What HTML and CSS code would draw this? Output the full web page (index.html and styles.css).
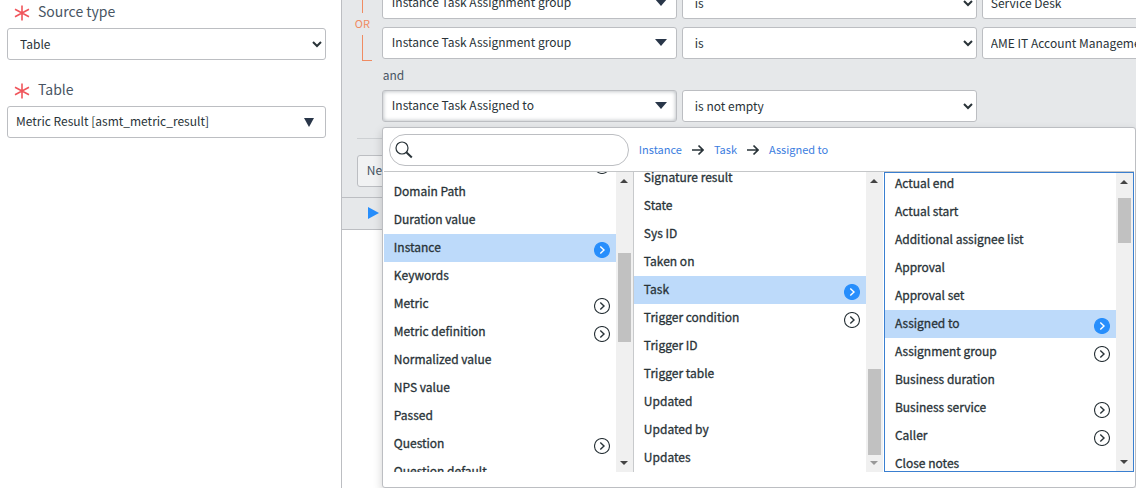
FILE: index.html
```html
<!DOCTYPE html>
<html lang="en">
<head>
<meta charset="utf-8">
<title>Condition builder</title>
<link rel="stylesheet" href="styles.css">
</head>
<body>
<svg class="defs" aria-hidden="true">
  <symbol id="star" viewBox="0 0 16 16"><path d="M8 .5v15M1 4.3l14 7.4M15 4.3L1 11.7" fill="none" stroke="#f0555b" stroke-width="1.6"/></symbol>
  <symbol id="more" viewBox="0 0 16 16"><circle class="ring" cx="8" cy="8" r="7.5"/><path class="chev" d="M6.3 4.5L10 8l-3.700 3.500"/></symbol>
  <symbol id="arrow" viewBox="0 0 12 12"><path d="M0 6h11M6.500 1.500L11 6l-4.500 4.500" fill="none" stroke="#293338" stroke-width="1.7"/></symbol>
</svg>
<aside class="source">
  <div class="field">
    <label class="field-label" for="stype"><svg class="star"><use href="#star"/></svg>Source type</label>
    <select class="control" id="stype"><option>Table</option></select>
  </div>
  <div class="field">
    <label class="field-label" for="table"><svg class="star"><use href="#star"/></svg>Table</label>
    <button class="control picker picker-table" id="table" type="button">Metric Result [asmt_metric_result]<svg class="caret-tall" viewBox="0 0 10 9"><path d="M0 0h10L5 9z"/></svg></button>
  </div>
</aside>
<main class="builder">
  <section class="conditions">
    <div class="group">
      <div class="or"><span class="or-top"></span><span class="or-text">OR</span><span class="or-bottom"></span></div>
      <div class="rows">
        <div class="row">
          <button class="control picker" type="button">Instance Task Assignment group<svg class="caret" viewBox="0 0 12 7"><path d="M0 0h12L6 7z"/></svg></button>
          <select class="control" aria-label="Operator"><option>is</option></select>
          <input class="control" aria-label="Value" value="Service Desk">
        </div>
        <div class="row">
          <button class="control picker" type="button">Instance Task Assignment group<svg class="caret" viewBox="0 0 12 7"><path d="M0 0h12L6 7z"/></svg></button>
          <select class="control" aria-label="Operator"><option>is</option></select>
          <input class="control" aria-label="Value" value="AME IT Account Management">
        </div>
      </div>
    </div>
    <div class="and">and</div>
    <div class="row row-last">
      <button class="control picker open" type="button">Instance Task Assigned to<svg class="caret" viewBox="0 0 12 7"><path d="M0 0h12L6 7z"/></svg></button>
      <select class="control" aria-label="Operator"><option>is not empty</option></select>
    </div>
    <div class="new-area"><button class="new" type="button">New Criteria</button></div>
  </section>
  <div class="related"><svg class="play" viewBox="0 0 11 12"><path d="M0 0l11 6-11 6z"/></svg></div>

  <div class="popup">
    <header class="popup-head">
      <label class="search"><svg viewBox="0 0 18 18"><circle cx="7" cy="7" r="6"/><path d="M11.300 11.300l5.500 5.200" stroke-width="2"/></svg><input type="search" aria-label="Search fields"></label>
      <nav class="crumbs"><a href="#">Instance</a><svg><use href="#arrow"/></svg><a href="#">Task</a><svg><use href="#arrow"/></svg><a href="#">Assigned to</a></nav>
    </header>
    <div class="columns">
      <div class="column first">
        <ul class="list">
          <li><svg><use href="#more"/></svg></li>
          <li>Domain Path</li>
          <li>Duration value</li>
          <li class="on">Instance<svg><use href="#more"/></svg></li>
          <li>Keywords</li>
          <li>Metric<svg><use href="#more"/></svg></li>
          <li>Metric definition<svg><use href="#more"/></svg></li>
          <li>Normalized value</li>
          <li>NPS value</li>
          <li>Passed</li>
          <li>Question<svg><use href="#more"/></svg></li>
          <li>Question default</li>
        </ul>
        <div class="bar"><span class="up"></span><span class="thumb"></span><span class="down"></span></div>
      </div>
      <div class="column second">
        <ul class="list">
          <li>Signature result</li>
          <li>State</li>
          <li>Sys ID</li>
          <li>Taken on</li>
          <li class="on">Task<svg><use href="#more"/></svg></li>
          <li>Trigger condition<svg><use href="#more"/></svg></li>
          <li>Trigger ID</li>
          <li>Trigger table</li>
          <li>Updated</li>
          <li>Updated by</li>
          <li>Updates</li>
        </ul>
        <div class="bar"><span class="up"></span><span class="thumb"></span><span class="down end"></span></div>
      </div>
      <div class="column third">
        <ul class="list">
          <li>Actual end</li>
          <li>Actual start</li>
          <li>Additional assignee list</li>
          <li>Approval</li>
          <li>Approval set</li>
          <li class="on">Assigned to<svg><use href="#more"/></svg></li>
          <li>Assignment group<svg><use href="#more"/></svg></li>
          <li>Business duration</li>
          <li>Business service<svg><use href="#more"/></svg></li>
          <li>Caller<svg><use href="#more"/></svg></li>
          <li>Close notes</li>
        </ul>
        <div class="bar"><span class="up"></span><span class="thumb"></span><span class="down"></span></div>
      </div>
    </div>
  </div>
</main>
</body>
</html>
```
FILE: styles.css
```css
* { box-sizing: border-box; }
body {
  margin: 0;
  display: flex;
  min-height: 100vh;
  overflow: hidden;
  background: #fff;
  color: #293338;
  font: 12px/20px "Noto Sans CJK SC", "Open Sans", sans-serif;
}
.defs { position: absolute; width: 0; height: 0; }
.source { flex: 0 0 30%; padding: 0 15px 0 7px; }
.field { margin-bottom: 18px; }
.field-label {
  display: flex;
  align-items: center;
  gap: 8px;
  height: 28px;
  padding: 0 0 6px 7px;
  font-size: 14px;
  color: #485563;
}
.star { width: 16px; height: 16px; margin-top: 3px; }
.control {
  flex: 0 0 295px;
  width: 295px;
  height: 32px;
  margin: 0;
  padding: 0 8px 2px;
  border: 1px solid #bcbec2;
  border-radius: 3px;
  background-color: #fff;
  color: #293338;
  font: inherit;
}
.source .control { width: 100%; }
.picker { display: flex; align-items: center; justify-content: space-between; text-align: left; padding: 0 9px 2px; }
.picker-table { padding: 0 11px 2px 8px; }
.picker svg { fill: #293649; }
.caret { width: 12px; height: 7px; }
.caret-tall { width: 10px; height: 9px; margin-top: 2px; }
.open { box-shadow: inset 0 0 4px #aab0b5; }

.builder { position: relative; flex: 1; min-width: 0; border-left: 1px solid #bcbec2; overflow: hidden; }
.conditions { background: #e6e8ea; padding-bottom: 10px; }
.group { display: flex; margin-top: -13px; }
.or { flex: 0 0 40px; display: flex; flex-direction: column; height: 74px; color: #f08b62; }
.or-top { height: 26px; margin-left: 20px; border-left: 1px solid; }
.or-text { height: 22px; line-height: 20px; padding-left: 13px; font-size: 11px; }
.or-bottom { flex: 1; width: 10px; margin-left: 20px; border: solid; border-width: 0 0 1px 1px; }
.rows { display: flex; flex-direction: column; gap: 8px; }
.row { display: flex; gap: 5px; }
.and { margin-top: -2px; height: 31px; line-height: 32px; padding-left: 41px; color: #485563; }
.row-last { padding-left: 40px; }
.new-area { margin: 16px 15px 0; padding-top: 16px; border-top: 1px solid #cdd0d3; }
.new { height: 32px; padding: 0 9px 2px; border: 1px solid #bcbec2; border-radius: 3px; background: #f1f2f3; color: #485563; font: inherit; }
.related { height: 33px; padding: 9px 26px; background: #e6e8ea; border: solid #bcbec2; border-width: 1px 0; }
.play { display: block; width: 11px; height: 12px; fill: #278efc; }

.popup {
  position: absolute;
  top: 127px;
  left: 40px;
  right: 0;
  padding: 0 1px 15px;
  border: 1px solid #bcbec2;
  border-radius: 3px;
  background: #fff;
  box-shadow: 0 4px 10px rgba(0, 0, 0, .18);
}
.popup-head { display: flex; align-items: center; gap: 10px; height: 44px; padding: 0 5px; border-bottom: 1px solid #c4c6c8; }
.search { display: flex; align-items: center; width: 240px; height: 32px; padding: 0 12px 0 5px; border: 1px solid #bcbec2; border-radius: 16px; }
.search svg { flex: none; width: 18px; height: 18px; fill: none; stroke: #293338; stroke-width: 1.2; }
.search input { flex: 1; min-width: 0; border: 0; outline: 0; background: none; font: inherit; }
.crumbs { display: flex; align-items: center; gap: 10px; padding-bottom: 2px; font-size: 11px; }
.crumbs svg { width: 12px; height: 12px; margin-top: 2px; }
.crumbs a { color: #3b7de0; text-decoration: none; }
.columns { display: grid; grid-template-columns: repeat(3, 1fr); height: 300px; }
.column { display: flex; min-width: 0; overflow: hidden; border-right: 1px solid #c8cacc; }
.second { padding-right: 1px; border-right: 0; }
.third { border: 1px solid #3a7fd0; }
.list { flex: 1; margin: 0; padding: 0; list-style: none; -webkit-text-stroke: 0.3px; }
.first .list { margin-top: -22px; }
.second .list { margin-top: -8px; }
.third .list { margin-top: -3px; }
.list li { display: flex; justify-content: space-between; height: 28px; padding: 0 6px 0 10px; line-height: 26px; }
.list svg { width: 16px; height: 16px; margin: 8px 0 0 auto; overflow: visible; fill: none; stroke: #293338; stroke-width: 1.1; }
.list .on { --chev: #fff; background: #bddafa; }
.list .on svg { fill: #278efc; stroke: #278efc; }
.chev { fill: none; stroke: var(--chev, #293338); stroke-width: 1.4; }
.bar { flex: 0 0 17px; display: flex; flex-direction: column; align-items: center; padding: 7px 0; background: #f0f0f0; }
.up { border: 4px solid transparent; border-top: 0; border-bottom: 4px solid #444; }
.down { margin-top: auto; border: 4px solid transparent; border-bottom: 0; border-top: 4px solid #444; }
.end { border-top-color: #999; }
.thumb { width: 13px; background: #c1c1c1; }
.first .thumb { height: 89px; margin-top: 70px; }
.second .thumb { height: 86px; margin-top: 186px; }
.third .thumb { height: 45px; margin-top: 14px; }
```
